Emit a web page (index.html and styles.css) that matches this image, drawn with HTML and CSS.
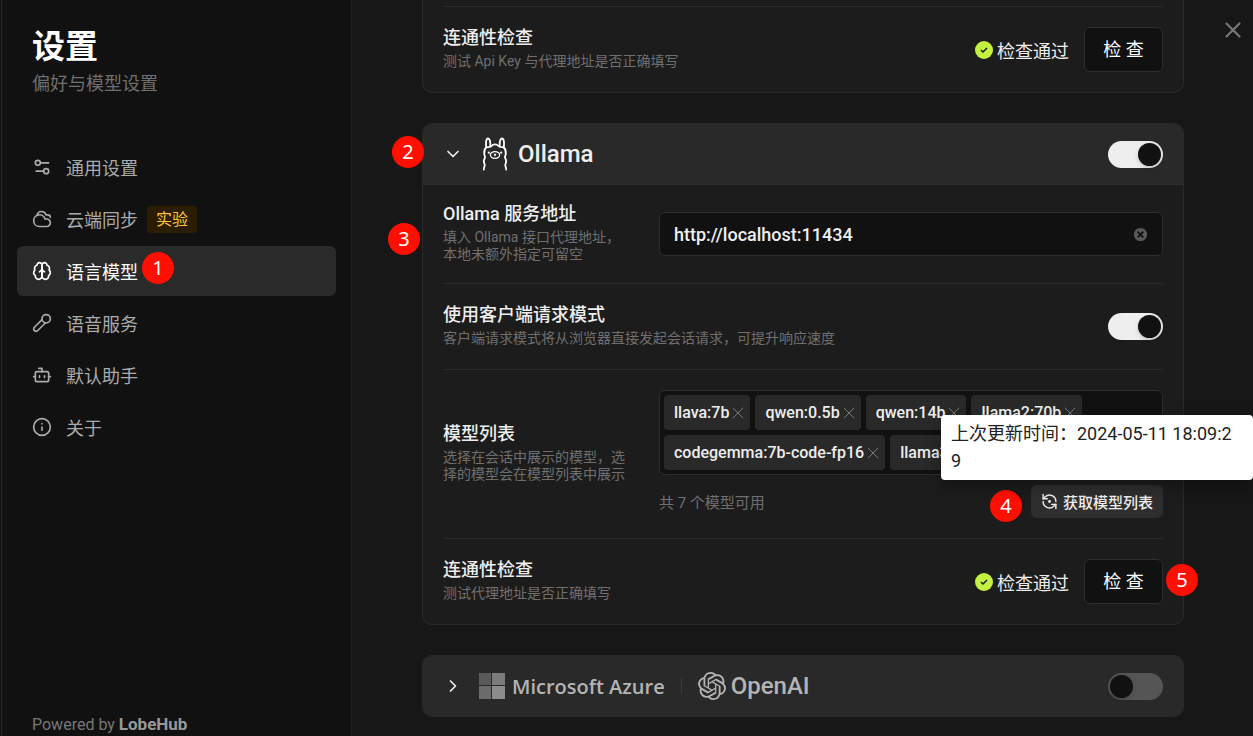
FILE: index.html
```
<!DOCTYPE html>
<html lang="zh-CN">
<head>
    <meta charset="UTF-8">
    <meta name="viewport" content="width=device-width, initial-scale=1.0">
    <title>设置 - 语言模型</title>
    <link rel="stylesheet" href="styles.css">
</head>
<body>
    <aside class="sidebar">
        <h1>设置</h1>
        <p class="subtitle">偏好与模型设置</p>
        <nav class="menu">
            <a href="#common">
                <svg class="icon" viewBox="0 0 24 24"><path d="M20 7h-9M14 17H5"/><circle cx="17" cy="17" r="3"/><circle cx="7" cy="7" r="3"/></svg>
                通用设置
            </a>
            <a href="#sync">
                <svg class="icon" viewBox="0 0 24 24"><path d="M17.5 21H9a7 7 0 1 1 6.71-9h1.79a4.5 4.5 0 1 1 0 9Z"/><path d="M22 10a3 3 0 0 0-3-3h-2.207a5.502 5.502 0 0 0-10.702.5"/></svg>
                云端同步
                <span class="tag-beta">实验</span>
            </a>
            <a href="#llm" class="active">
                <svg class="icon" viewBox="0 0 24 24"><path d="M12 5a3 3 0 1 0-5.997.125 4 4 0 0 0-2.526 5.77 4 4 0 0 0 .556 6.588A4 4 0 1 0 12 18Z"/><path d="M12 5a3 3 0 1 1 5.997.125 4 4 0 0 1 2.526 5.77 4 4 0 0 1-.556 6.588A4 4 0 1 1 12 18Z"/><path d="M15 13a4.5 4.5 0 0 1-3-4 4.5 4.5 0 0 1-3 4"/></svg>
                语言模型
                <span class="step step-1">1</span>
            </a>
            <a href="#tts">
                <svg class="icon" viewBox="0 0 24 24"><path d="m12 8-9.04 9.06a2.82 2.82 0 1 0 3.98 3.98L16 12"/><circle cx="17" cy="7" r="5"/></svg>
                语音服务
            </a>
            <a href="#agent">
                <svg class="icon" viewBox="0 0 24 24"><path d="M12 8V4H8"/><rect width="16" height="12" x="4" y="8" rx="2"/><path d="M2 14h2M20 14h2M15 13v2M9 13v2"/></svg>
                默认助手
            </a>
            <a href="#about">
                <svg class="icon" viewBox="0 0 24 24"><circle cx="12" cy="12" r="10"/><path d="M12 16v-4M12 8h.01"/></svg>
                关于
            </a>
        </nav>
        <footer class="powered">Powered by <strong>LobeHub</strong></footer>
    </aside>

    <main class="content">
        <button class="close" aria-label="关闭">
            <svg class="icon" viewBox="0 0 24 24"><path d="M18 6 6 18M6 6l12 12"/></svg>
        </button>

        <section class="card card-open-top">
            <div class="row">
                <div class="row-text">
                    <h3>连通性检查</h3>
                    <p>测试 Api Key 与代理地址是否正确填写</p>
                </div>
                <div class="check">
                    <span class="passed">
                        <svg viewBox="0 0 18 18"><circle cx="9" cy="9" r="9"/><path d="m6 9 2 2 4-4"/></svg>
                        检查通过
                    </span>
                    <button class="btn-check">检 查</button>
                </div>
            </div>
        </section>

        <section class="card">
            <header class="card-header">
                <span class="step step-2">2</span>
                <button class="fold" aria-label="收起">
                    <svg class="icon" viewBox="0 0 24 24"><path d="m6 9 6 6 6-6"/></svg>
                </button>
                <h2 class="brand">
                    <svg class="llama" viewBox="0 0 28 34">
                        <path d="M5.200 10.500C4.600 6 5 1.500 7 1.500s2.400 3.500 2.300 7"/>
                        <path d="M5.200 10.500C3.500 12 3 14 3.200 16.500c.1 1.800.8 2.500.8 3.500 0 1.500-1.200 2.500-1.200 4.500 0 1.500.9 2 .9 3.500 0 1.500-.9 2.500-.9 4.500"/>
                        <g transform="matrix(-1 0 0 1 28 0)">
                            <path d="M5.200 10.500C4.600 6 5 1.500 7 1.500s2.400 3.500 2.300 7"/>
                            <path d="M5.200 10.500C3.500 12 3 14 3.200 16.500c.1 1.800.8 2.500.8 3.500 0 1.500-1.200 2.500-1.200 4.500 0 1.500.9 2 .9 3.500 0 1.500-.9 2.500-.9 4.500"/>
                        </g>
                        <path d="M6 10.200c2.500 0 3.800-.3 4.500-1.200 1.800-2.200 5.200-2.200 7 0 .7.900 2 1.200 4.500 1.200"/>
                        <ellipse class="thin" cx="14" cy="18" rx="4.600" ry="3.400"/>
                        <path class="thin" d="M13.400 17.300h1.200M14 17.500v1.200"/>
                        <circle class="dot" cx="7.800" cy="15.700" r="1.100"/>
                        <circle class="dot" cx="20.200" cy="15.700" r="1.100"/>
                    </svg>
                    Ollama
                </h2>
                <input type="checkbox" class="switch" aria-label="启用 Ollama" checked>
            </header>

            <div class="row">
                <span class="step step-3">3</span>
                <div class="row-text">
                    <h3><label for="endpoint">Ollama 服务地址</label></h3>
                    <p>填入 Ollama 接口代理地址，本地未额外指定可留空</p>
                </div>
                <div class="control input-box">
                    <input type="text" id="endpoint" value="http://localhost:11434">
                    <button class="clear" aria-label="清除">
                        <svg viewBox="0 0 16 16"><circle cx="8" cy="8" r="8"/><path d="m5 5 6 6M11 5l-6 6"/></svg>
                    </button>
                </div>
            </div>

            <div class="row">
                <div class="row-text wide">
                    <h3><label for="clientFetch">使用客户端请求模式</label></h3>
                    <p>客户端请求模式将从浏览器直接发起会话请求，可提升响应速度</p>
                </div>
                <input type="checkbox" class="switch" id="clientFetch" checked>
            </div>

            <div class="row">
                <div class="row-text">
                    <h3>模型列表</h3>
                    <p>选择在会话中展示的模型，选择的模型会在模型列表中展示</p>
                </div>
                <div class="control">
                    <div class="models">
                        <span class="model">llava:7b <button aria-label="移除 llava:7b"><svg class="icon" viewBox="0 0 10 10"><path d="m0 0 10 10M10 0 0 10"/></svg></button></span>
                        <span class="model">qwen:0.5b <button aria-label="移除 qwen:0.5b"><svg class="icon" viewBox="0 0 10 10"><path d="m0 0 10 10M10 0 0 10"/></svg></button></span>
                        <span class="model">qwen:14b <button aria-label="移除 qwen:14b"><svg class="icon" viewBox="0 0 10 10"><path d="m0 0 10 10M10 0 0 10"/></svg></button></span>
                        <span class="model">llama2:70b <button aria-label="移除 llama2:70b"><svg class="icon" viewBox="0 0 10 10"><path d="m0 0 10 10M10 0 0 10"/></svg></button></span>
                        <span class="model">codegemma:7b-code-fp16 <button aria-label="移除 codegemma"><svg class="icon" viewBox="0 0 10 10"><path d="m0 0 10 10M10 0 0 10"/></svg></button></span>
                        <span class="model">llama3 <button aria-label="移除 llama3"><svg class="icon" viewBox="0 0 10 10"><path d="m0 0 10 10M10 0 0 10"/></svg></button></span>
                    </div>
                    <div class="models-footer">
                        <span>共 7 个模型可用</span>
                        <div class="fetch">
                            <span class="step step-4">4</span>
                            <button class="btn-fetch">
                                <svg class="icon" viewBox="0 0 24 24"><path d="M3 2v6h6"/><path d="M21 12A9 9 0 0 0 6 5.300L3 8"/><path d="M21 22v-6h-6"/><path d="M3 12a9 9 0 0 0 15 6.700l3-2.700"/><circle cx="12" cy="12" r="1"/></svg>
                                获取模型列表
                            </button>
                            <div class="tooltip" role="tooltip">上次更新时间：2024-05-11 18:09:29</div>
                        </div>
                    </div>
                </div>
            </div>

            <div class="row">
                <span class="step step-5">5</span>
                <div class="row-text">
                    <h3>连通性检查</h3>
                    <p>测试代理地址是否正确填写</p>
                </div>
                <div class="check">
                    <span class="passed">
                        <svg viewBox="0 0 18 18"><circle cx="9" cy="9" r="9"/><path d="m6 9 2 2 4-4"/></svg>
                        检查通过
                    </span>
                    <button class="btn-check">检 查</button>
                </div>
            </div>
        </section>

        <section class="card">
            <header class="card-header">
                <button class="fold" aria-label="展开">
                    <svg class="icon" viewBox="0 0 24 24"><path d="m9 18 6-6-6-6"/></svg>
                </button>
                <h2 class="brand brand-off">
                    <svg class="ms-logo" viewBox="0 0 26 26"><path fill="#5a5a5a" d="M0 0h12v12H0z"/><path fill="#7b7b7b" d="M13 0h13v12H13z"/><path fill="#6b6b6b" d="M0 13h12v13H0z"/><path fill="#8c8c8c" d="M13 13h13v13H13z"/></svg>
                    <span class="azure">Microsoft Azure</span>
                    <span class="divider"></span>
                    <svg class="openai-logo" viewBox="0 0 24 24"><path d="M22.282 9.821a5.985 5.985 0 0 0-.516-4.910 6.046 6.046 0 0 0-6.510-2.900A6.065 6.065 0 0 0 4.981 4.182a5.985 5.985 0 0 0-3.998 2.900 6.046 6.046 0 0 0 .743 7.097 5.980 5.980 0 0 0 .510 4.911 6.051 6.051 0 0 0 6.515 2.900A5.985 5.985 0 0 0 13.260 24a6.056 6.056 0 0 0 5.772-4.206 5.990 5.990 0 0 0 3.997-2.900 6.056 6.056 0 0 0-.747-7.073zM13.260 22.430a4.476 4.476 0 0 1-2.876-1.040l.141-.081 4.779-2.758a.795.795 0 0 0 .392-.681v-6.737l2.020 1.168a.071.071 0 0 1 .038.052v5.583a4.504 4.504 0 0 1-4.494 4.494zM3.600 18.304a4.470 4.470 0 0 1-.535-3.014l.142.085 4.783 2.759a.771.771 0 0 0 .780 0l5.843-3.369v2.332a.080.080 0 0 1-.033.062L9.740 19.950a4.500 4.500 0 0 1-6.140-1.646zM2.340 7.896a4.485 4.485 0 0 1 2.366-1.973V11.600a.766.766 0 0 0 .388.676l5.815 3.355-2.020 1.168a.076.076 0 0 1-.071 0l-4.830-2.786A4.504 4.504 0 0 1 2.340 7.872zm16.597 3.855-5.833-3.387L15.119 7.200a.076.076 0 0 1 .071 0l4.830 2.791a4.494 4.494 0 0 1-.676 8.105v-5.678a.790.790 0 0 0-.407-.667zm2.010-3.023-.141-.085-4.774-2.782a.776.776 0 0 0-.785 0L9.409 9.230V6.897a.066.066 0 0 1 .028-.061l4.830-2.787a4.499 4.499 0 0 1 6.680 4.660zM8.307 12.863l-2.020-1.164a.080.080 0 0 1-.038-.057V6.075a4.499 4.499 0 0 1 7.375-3.453l-.142.080-4.778 2.758a.795.795 0 0 0-.393.682zm1.097-2.365 2.602-1.500 2.607 1.500v2.999l-2.597 1.500-2.607-1.500z"/></svg>
                    <span class="openai">OpenAI</span>
                </h2>
                <input type="checkbox" class="switch" aria-label="启用 Azure OpenAI">
            </header>
        </section>
    </main>
</body>
</html>
```
FILE: styles.css
```
* {
    box-sizing: border-box;
}
body {
    font-family: Roboto, 'Noto Sans CJK SC', sans-serif;
    font-size: 18px;
    margin: 0 0 0 1px;
    border-left: 1px solid #2a2a2a;
    min-height: 100vh;
    display: flex;
    background: #111;
    color: #eee;
}
h1, h2, h3, p {
    margin: 0;
}
button {
    font-family: inherit;
    color: inherit;
    background: none;
    border: none;
    padding: 0;
    cursor: pointer;
}
svg {
    display: block;
    flex: none;
}
.icon {
    width: 20px;
    height: 20px;
    fill: none;
    stroke: currentColor;
    stroke-width: 2;
    stroke-linecap: round;
    stroke-linejoin: round;
}

/* Sidebar */
.sidebar {
    width: 350px;
    flex: none;
    padding: 26px 15px 0;
    border-right: 1px solid #222;
    display: flex;
    flex-direction: column;
}
.sidebar h1 {
    padding-left: 15px;
    font-size: 33px;
    line-height: 42px;
    color: #fff;
}
.subtitle {
    padding-left: 15px;
    line-height: 32px;
    color: #6f6f6f;
}
.menu {
    display: flex;
    flex-direction: column;
    gap: 2px;
    margin-top: 42px;
}
.menu a {
    position: relative;
    display: flex;
    align-items: center;
    height: 50px;
    padding: 0 15px;
    border-radius: 6px;
    color: #aaa;
    text-decoration: none;
}
.menu .icon {
    margin-right: 14px;
}
.menu a.active {
    background: #2a2a2a;
    color: #fff;
}
.tag-beta {
    margin-left: 9px;
    padding: 0 9px;
    border-radius: 4px;
    background: #2b1d00;
    color: #ffc53d;
    font-size: 16px;
    line-height: 27px;
}
.powered {
    margin-top: auto;
    padding-left: 15px;
    font-size: 16px;
    line-height: 22px;
    color: #777;
}
.powered strong {
    font-size: 17px;
    color: #999;
}

/* Content */
.content {
    position: relative;
    flex: 1;
    min-width: 0;
    padding: 0 69px 19px 70px;
    background: #171717;
    display: flex;
    flex-direction: column;
    gap: 30px;
}
.close {
    position: absolute;
    top: 17px;
    right: 7px;
    color: #777;
}
.close .icon {
    width: 26px;
    height: 26px;
    stroke-width: 2;
}
.card {
    border: 1px solid #2a2a2a;
    border-radius: 10px;
    background: #1c1c1c;
}
.card-open-top {
    border-top: none;
    border-radius: 0 0 10px 10px;
    padding-top: 6px;
}
.card-open-top .row {
    border-top: 1px solid #2a2a2a;
}
.card-header {
    position: relative;
    display: flex;
    align-items: center;
    height: 60px;
    padding: 0 20px;
    border-radius: 9px;
    background: #292929;
}
.card-header:not(:last-child) {
    height: 61px;
    border-radius: 9px 9px 0 0;
    border-bottom: 1px solid #2e2e2e;
}
.fold {
    margin-right: 16px;
}
.brand {
    flex: 1;
    display: flex;
    align-items: center;
    gap: 7px;
    font-size: 24px;
    font-weight: 500;
}
.brand-off {
    color: #b4b4b4;
}
.llama {
    width: 32px;
    height: 34px;
    fill: none;
    stroke: #fff;
    stroke-width: 1.8;
    stroke-linecap: round;
}
.llama .thin {
    stroke-width: 1.3;
}
.llama .dot {
    fill: #fff;
    stroke: none;
}
.ms-logo {
    width: 26px;
    height: 26px;
}
.azure {
    font-family: 'Open Sans', sans-serif;
    font-size: 20px;
    font-weight: 600;
}
.divider {
    width: 1px;
    height: 16px;
    margin: 0 9px;
    background: #3a3a3a;
}
.openai-logo {
    width: 28px;
    height: 28px;
    fill: #b4b4b4;
}
.openai {
    margin-left: -2px;
}

/* Form rows */
.row {
    position: relative;
    display: flex;
    align-items: center;
    justify-content: space-between;
    margin: 0 20px;
    padding: 20px 0;
}
.row + .row {
    border-top: 1px solid #2a2a2a;
}
.row-text {
    flex: 1;
    padding-right: 32px;
}
.row-text h3 {
    margin-bottom: 6px;
    font-size: 18px;
    font-weight: 500;
    line-height: 18px;
}
.row-text p {
    font-size: 14px;
    line-height: 17px;
    color: #6f6f6f;
}
.row-text.wide {
    padding: 2px 0;
}
.control {
    width: 70%;
}
.input-box {
    display: flex;
    align-items: center;
    height: 44px;
    padding: 0 14px;
    border: 1px solid #2e2e2e;
    border-radius: 6px;
    background: #111;
}
.input-box input {
    flex: 1;
    min-width: 0;
    padding: 0;
    border: none;
    outline: none;
    background: none;
    color: #eee;
    font: 500 18px Roboto, sans-serif;
}
.clear svg {
    width: 15px;
    height: 15px;
    fill: #5a5a5a;
    stroke: #111;
    stroke-width: 2;
}
.switch {
    appearance: none;
    flex: none;
    width: 55px;
    height: 27px;
    margin: 0;
    padding: 2px;
    border-radius: 14px;
    background: #555;
    display: flex;
    cursor: pointer;
}
.switch::before {
    content: '';
    width: 23px;
    height: 23px;
    border-radius: 50%;
    background: #111;
    box-shadow: 0 2px 4px rgba(0,35,11,0.2);
}
.switch:checked {
    justify-content: flex-end;
    background: #eee;
}
.check {
    display: flex;
    align-items: center;
    gap: 15px;
}
.passed {
    display: flex;
    align-items: center;
    gap: 4px;
}
.passed svg {
    width: 18px;
    height: 18px;
    fill: #c4f042;
}
.passed path {
    fill: none;
    stroke: #1c1c1c;
    stroke-width: 1.5;
}
.btn-check {
    width: 79px;
    height: 45px;
    padding-bottom: 3px;
    border: 1px solid #2e2e2e;
    border-radius: 6px;
    background: #111;
    color: #fff;
    font-size: 18px;
}

/* Model list */
.models {
    display: flex;
    flex-wrap: wrap;
    gap: 5px;
    padding: 4px;
    border: 1px solid #2e2e2e;
    border-radius: 6px;
    background: #111;
}
.model {
    display: flex;
    align-items: center;
    gap: 4px;
    height: 35px;
    padding: 0 7px 0 10px;
    border-radius: 4px;
    background: #292929;
    font-size: 16px;
    font-weight: 500;
}
.model .icon {
    width: 10px;
    height: 10px;
    overflow: visible;
    stroke: #777;
    stroke-width: 1;
}
.models-footer {
    display: flex;
    align-items: center;
    justify-content: space-between;
    margin-top: 10px;
    font-size: 15px;
    color: #6f6f6f;
}
.fetch {
    position: relative;
}
.btn-fetch {
    display: flex;
    align-items: center;
    gap: 5px;
    height: 33px;
    padding: 0 10px;
    border-radius: 6px;
    background: #2e2e2e;
    color: #eee;
    font-size: 15px;
    font-weight: 500;
}
.btn-fetch .icon {
    width: 17px;
    height: 17px;
}
.tooltip {
    position: absolute;
    right: -90px;
    bottom: calc(100% + 5px);
    width: 312px;
    padding: 5px 18px 6px 10px;
    border-radius: 4px;
    background: #fff;
    box-shadow: 0 6px 16px rgba(0,0,0,0.3);
    color: #222;
    font-size: 18px;
    line-height: 27px;
    word-break: break-all;
}

/* Numbered step markers */
.step {
    position: absolute;
    width: 32px;
    height: 32px;
    border-radius: 50%;
    background: #ff0f00;
    color: #fff;
    font: 20px/32px 'Noto Sans', sans-serif;
    text-align: center;
}
.step-1 {
    top: 6px;
    left: 125px;
}
.step-2 {
    top: 12px;
    left: -31px;
}
.step-3 {
    top: 38px;
    left: -55px;
}
.step-4 {
    top: 5px;
    left: -41px;
}
.step-5 {
    top: 25px;
    right: -35px;
}
```
